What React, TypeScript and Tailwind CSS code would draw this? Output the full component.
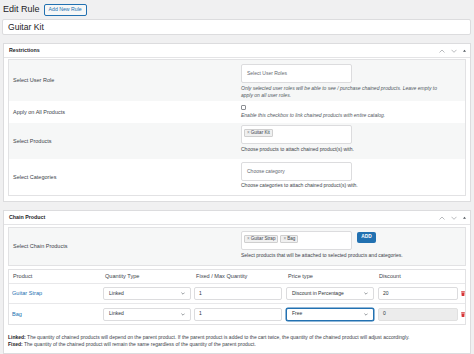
import React from "react";

function Handles() {
  return (
    <div className="flex items-center gap-[6px] text-[#a7aaad] pr-[4px]">
      <svg width="6" height="4" viewBox="0 0 6 4">
        <path d="M0.5 3.5 L3 1 L5.5 3.5" fill="none" stroke="currentColor" strokeWidth="0.8" />
      </svg>
      <svg width="6" height="4" viewBox="0 0 6 4">
        <path d="M0.5 0.8 L3 3.3 L5.5 0.8" fill="none" stroke="currentColor" strokeWidth="0.8" />
      </svg>
      <svg width="3" height="3" viewBox="0 0 4 3" className="text-[#50575e]">
        <path d="M0 3 L2 0.5 L4 3Z" fill="currentColor" />
      </svg>
    </div>
  );
}

function Panel({ title, children }: { title: string; children: React.ReactNode }) {
  return (
    <div className="mx-[3px] bg-white border border-[#dcdcde]">
      <div className="h-[14px] border-b border-[#e4e4e6] flex items-center justify-between pl-[5px]">
        <span className="text-[5.3px] font-bold text-[#1d2327]">{title}</span>
        <Handles />
      </div>
      {children}
    </div>
  );
}

function Tag({ children }: { children: React.ReactNode }) {
  return (
    <span className="inline-flex items-center h-[8px] px-[2px] bg-[#f0f0f0] border border-[#cfcfcf] rounded-[1px] text-[4.6px] text-[#3c434a] leading-none">
      <span className="text-[#8c8f94] mr-[1px]">×</span>
      {children}
    </span>
  );
}

function Box({ children, className = "" }: { children: React.ReactNode; className?: string }) {
  return (
    <div className={`w-[111px] h-[19px] border border-[#dcdcde] rounded-[2px] bg-white flex ${className}`}>
      {children}
    </div>
  );
}

function Chevron() {
  return (
    <svg width="4" height="3" viewBox="0 0 4 3">
      <path d="M0.4 0.6 L2 2.2 L3.6 0.6" fill="none" stroke="#50575e" strokeWidth="0.6" />
    </svg>
  );
}

function Select({ value, active }: { value: string; active?: boolean }) {
  return (
    <div
      className={
        active
          ? "h-[13px] w-[88px] border border-[#2271b1] shadow-[0_0_0_0.5px_#2271b1] rounded-[2px] bg-white flex items-center justify-between pl-[5px] pr-[5px] text-[5px] text-[#2c3338]"
          : "h-[13px] w-[88px] border border-[#dcdcde] rounded-[2px] bg-white flex items-center justify-between pl-[5px] pr-[5px] text-[5px] text-[#2c3338]"
      }
    >
      <span>{value}</span>
      <Chevron />
    </div>
  );
}

function Input({ value, disabled, w = "w-[88px]" }: { value: string; disabled?: boolean; w?: string }) {
  return (
    <div
      className={
        (disabled
          ? "bg-[#ececec] border-[#e0e0e0] "
          : "bg-white border-[#dcdcde] ") +
        w +
        " h-[13px] border rounded-[2px] flex items-center pl-[4px] text-[5px] text-[#2c3338]"
      }
    >
      {value}
    </div>
  );
}

function Trash() {
  return (
    <svg width="4" height="5" viewBox="0 0 4 5">
      <rect x="0" y="0.4" width="4" height="0.8" fill="#d63638" />
      <rect x="1.4" y="0" width="1.2" height="0.6" fill="#d63638" />
      <path d="M0.4 1.5 H3.6 L3.3 5 H0.7Z" fill="#d63638" />
    </svg>
  );
}

export default function App() {
  return (
    <div className="w-[474px] h-[354px] overflow-hidden bg-[#f0f0f1] font-['Liberation_Sans',Arial,sans-serif] text-[#3c434a]">
      {/* Title bar */}
      <div className="flex items-center h-[13px] mt-[3px] pl-[3px] gap-[4px]">
        <h1 className="text-[9px] text-[#1d2327] leading-none">Edit Rule</h1>
        <button className="h-[12px] px-[4px] border border-[#2271b1] rounded-[2px] bg-[#f6f7f7] text-[#2271b1] text-[5.2px] leading-none">
          Add New Rule
        </button>
      </div>

      {/* Title input */}
      <div className="ml-[2px] mr-[3px] mt-[3px] h-[16px] bg-white border border-[#dcdcde] rounded-[2px] flex items-center pl-[5px] text-[8.6px] text-[#1d2327]">
        Guitar Kit
      </div>

      {/* Restrictions */}
      <div className="mt-[8px]">
        <Panel title="Restrictions">
          <div className="px-[4px] pt-[1px] pb-[5px]">
            <div className="border border-[#e2e2e4]">
              {/* row 1 */}
              <div className="h-[41px] bg-[#f6f7f7] flex">
                <div className="w-[232px] pl-[4px] flex items-center text-[5.5px]">Select User Role</div>
                <div className="flex-1 pt-[4px]">
                  <Box className="items-center pl-[5px] text-[5px] text-[#646970]">Select User Roles</Box>
                  <p className="mt-[2px] text-[5px] italic leading-[7px] text-[#50575e]">
                    Only selected user roles will be able to see / purchase chained products. Leave empty to
                    <br />
                    apply on all user roles.
                  </p>
                </div>
              </div>
              {/* row 2 */}
              <div className="h-[22px] bg-white flex">
                <div className="w-[232px] pl-[4px] flex items-center text-[5.5px]">Apply on All Products</div>
                <div className="flex-1 pt-[4px]">
                  <div className="w-[5px] h-[5px] border border-[#8c8f94] rounded-[1px] bg-white" />
                  <p className="mt-[2px] text-[5px] italic leading-[7px] text-[#50575e]">
                    Enable this checkbox to link chained products with entire catalog.
                  </p>
                </div>
              </div>
              {/* row 3 */}
              <div className="h-[36px] bg-[#f6f7f7] flex">
                <div className="w-[232px] pl-[4px] flex items-center text-[5.5px]">Select Products</div>
                <div className="flex-1 pt-[2px]">
                  <Box className="items-start pl-[2px] pt-[3px]">
                    <Tag>Guitar Kit</Tag>
                  </Box>
                  <p className="mt-[2px] text-[5px] leading-[7px] text-[#3c434a]">
                    Choose products to attach chained product(s) with.
                  </p>
                </div>
              </div>
              {/* row 4 */}
              <div className="h-[36px] bg-white flex">
                <div className="w-[232px] pl-[4px] flex items-center text-[5.5px]">Select Categories</div>
                <div className="flex-1 pt-[3px]">
                  <Box className="items-center pl-[5px] text-[5px] text-[#646970]">Choose category</Box>
                  <p className="mt-[1px] text-[5px] leading-[7px] text-[#3c434a]">
                    Choose categories to attach chained product(s) with.
                  </p>
                </div>
              </div>
            </div>
          </div>
        </Panel>
      </div>

      {/* Chain Product */}
      <div className="mt-[8px]">
        <Panel title="Chain Product">
          <div className="px-[4px] pt-[2px] pb-[6px]">
            <div className="border border-[#e2e2e4]">
              <div className="h-[37px] bg-[#f6f7f7] flex">
                <div className="w-[232px] pl-[4px] flex items-center text-[5.5px]">Select Chain Products</div>
                <div className="flex-1 pt-[3px]">
                  <div className="flex items-start gap-[5px]">
                    <Box className="items-start pl-[2px] pt-[3px] gap-[2px]">
                      <Tag>Guitar Strap</Tag>
                      <Tag>Bag</Tag>
                    </Box>
                    <button className="mt-[1px] h-[11px] w-[19px] rounded-[2px] bg-[#2271b1] text-white text-[4.8px] font-bold leading-none">
                      ADD
                    </button>
                  </div>
                  <p className="mt-[2px] text-[5px] leading-[7px] text-[#3c434a]">
                    Select products that will be attached to selected products and categories.
                  </p>
                </div>
              </div>
            </div>

            {/* table */}
            <div className="mt-[3px] border border-[#e2e2e4] bg-white">
              <div className="grid grid-cols-[92px_92px_92px_92px_83px_1fr] h-[14px] items-center border-b border-[#e8e8ea] text-[5.6px] text-[#3c434a]">
                <div className="pl-[4px]">Product</div>
                <div className="pl-[4px]">Quantity Type</div>
                <div className="pl-[3px]">Fixed / Max Quantity</div>
                <div className="pl-[3px]">Price type</div>
                <div className="pl-[2px]">Discount</div>
                <div />
              </div>
              <div className="grid grid-cols-[92px_92px_92px_92px_83px_1fr] h-[20px] items-center border-b border-[#e8e8ea]">
                <div className="pl-[3px] text-[5.6px] text-[#2271b1]">Guitar Strap</div>
                <div className="pl-[2px]"><Select value="Linked" /></div>
                <div className="pl-[1px]"><Input value="1" /></div>
                <div className="pl-[1px]"><Select value="Discount in Percentage" /></div>
                <div className="pl-[1px]"><Input value="20" w="w-[80px]" /></div>
                <div className="flex justify-center"><Trash /></div>
              </div>
              <div className="grid grid-cols-[92px_92px_92px_92px_83px_1fr] h-[20px] items-center">
                <div className="pl-[3px] text-[5.6px] text-[#2271b1]">Bag</div>
                <div className="pl-[2px]"><Select value="Linked" /></div>
                <div className="pl-[1px]"><Input value="1" /></div>
                <div className="pl-[1px]"><Select value="Free" active /></div>
                <div className="pl-[1px]"><Input value="0" disabled w="w-[80px]" /></div>
                <div className="flex justify-center"><Trash /></div>
              </div>
            </div>

            <div className="mt-[9px] text-[5px] leading-[6.5px] text-[#3c434a]">
              <p>
                <b className="text-[#1d2327]">Linked:</b> The quantity of chained products will depend on the parent product. If the parent product is added to the cart twice, the quantity of the chained product will adjust accordingly.
              </p>
              <p>
                <b className="text-[#1d2327]">Fixed:</b> The quantity of the chained product will remain the same regardless of the quantity of the parent product.
              </p>
            </div>
          </div>
        </Panel>
      </div>
    </div>
  );
}
